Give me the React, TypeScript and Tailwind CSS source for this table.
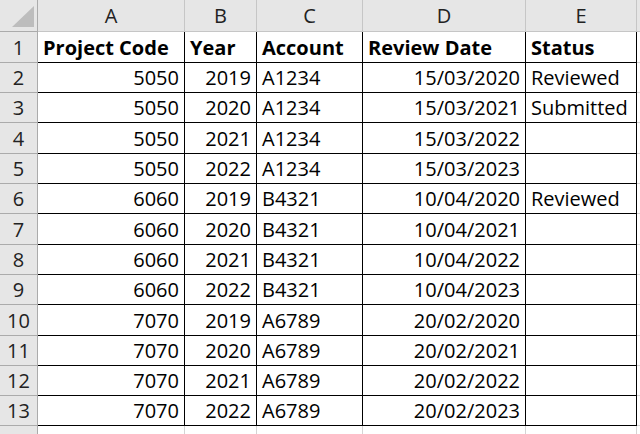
const cols = [
  { key: 'A', width: 'w-[147px]' },
  { key: 'B', width: 'w-[72px]' },
  { key: 'C', width: 'w-[106px]' },
  { key: 'D', width: 'w-[163px]' },
  { key: 'E', width: 'w-[111px]' },
];

type Row = { code: string; year: string; account: string; date: string; status: string };

const rows: Row[] = [
  { code: '5050', year: '2019', account: 'A1234', date: '15/03/2020', status: 'Reviewed' },
  { code: '5050', year: '2020', account: 'A1234', date: '15/03/2021', status: 'Submitted' },
  { code: '5050', year: '2021', account: 'A1234', date: '15/03/2022', status: '' },
  { code: '5050', year: '2022', account: 'A1234', date: '15/03/2023', status: '' },
  { code: '6060', year: '2019', account: 'B4321', date: '10/04/2020', status: 'Reviewed' },
  { code: '6060', year: '2020', account: 'B4321', date: '10/04/2021', status: '' },
  { code: '6060', year: '2021', account: 'B4321', date: '10/04/2022', status: '' },
  { code: '6060', year: '2022', account: 'B4321', date: '10/04/2023', status: '' },
  { code: '7070', year: '2019', account: 'A6789', date: '20/02/2020', status: '' },
  { code: '7070', year: '2020', account: 'A6789', date: '20/02/2021', status: '' },
  { code: '7070', year: '2021', account: 'A6789', date: '20/02/2022', status: '' },
  { code: '7070', year: '2022', account: 'A6789', date: '20/02/2023', status: '' },
];

// rows 1, 4, 7, 10 are a pixel taller, as in the sheet
const rowHeights = [
  'h-[31px]', 'h-[30px]', 'h-[30px]', 'h-[31px]', 'h-[30px]', 'h-[30px]', 'h-[31px]',
  'h-[30px]', 'h-[30px]', 'h-[31px]', 'h-[30px]', 'h-[30px]', 'h-[30px]',
];

const cellBase = 'flex shrink-0 items-center border-r border-b border-black px-[5px] pt-[1px] leading-none';

function RowHeader({ n }: { n: number }) {
  return (
    <div className="flex w-[38px] shrink-0 items-center justify-center border-r border-b border-[#ababab] bg-[#e6e6e6] pt-[1px] text-[#222]">
      {n}
    </div>
  );
}

export default function App() {
  const header = { code: 'Project Code', year: 'Year', account: 'Account', date: 'Review Date', status: 'Status' };

  return (
    <div className="h-[434px] w-[640px] overflow-hidden bg-white font-['Open_Sans',sans-serif] text-[20px] text-black">
      <div className="flex h-[32px] bg-[#e6e6e6]">
        <div className="relative w-[38px] shrink-0 border-r border-b border-[#ababab]">
          <svg className="absolute left-0 top-0" width="37" height="31" viewBox="0 0 37 31">
            <polygon points="12,27 34,27 34,6" fill="#bdbdbd" />
          </svg>
        </div>
        {cols.map((c) => (
          <div
            key={c.key}
            className={`${c.width} flex shrink-0 items-center justify-center border-r border-b border-[#c6c6c6] text-[#222]`}
          >
            {c.key}
          </div>
        ))}
        <div className="flex-1 border-b border-[#c6c6c6]" />
      </div>

      {[header, ...rows].map((r, i) => {
        const bold = i === 0 ? 'font-bold' : '';
        const right = i === 0 ? 'justify-start' : 'justify-end';
        return (
          <div key={i} className={`flex ${rowHeights[i]}`}>
            <RowHeader n={i + 1} />
            <div className={`${cellBase} w-[147px] ${right} ${bold}`}>{r.code}</div>
            <div className={`${cellBase} w-[72px] ${right} ${bold}`}>{r.year}</div>
            <div className={`${cellBase} w-[106px] justify-start ${bold}`}>{r.account}</div>
            <div className={`${cellBase} w-[163px] ${right} ${bold}`}>{r.date}</div>
            <div className={`${cellBase} w-[111px] justify-start whitespace-nowrap ${bold}`}>{r.status}</div>
            <div className="flex-1 border-b border-[#d4d4d4]" />
          </div>
        );
      })}

      <div className="flex h-[10px]">
        <div className="w-[38px] shrink-0 border-r border-[#ababab] bg-[#e6e6e6]" />
        <div className="w-[147px] shrink-0 border-r border-[#d4d4d4]" />
        <div className="w-[72px] shrink-0 border-r border-[#d4d4d4]" />
        <div className="w-[106px] shrink-0 border-r border-[#d4d4d4]" />
        <div className="w-[163px] shrink-0 border-r border-[#d4d4d4]" />
        <div className="w-[111px] shrink-0 border-r border-[#d4d4d4]" />
      </div>
    </div>
  );
}
